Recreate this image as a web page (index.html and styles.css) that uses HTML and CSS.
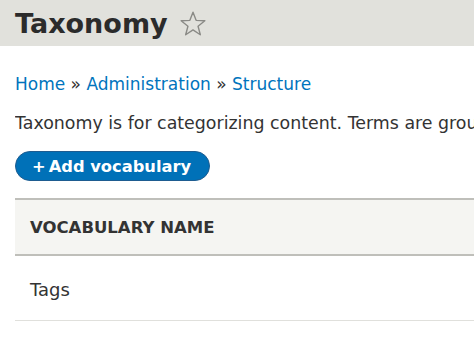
FILE: index.html
```html
<!DOCTYPE html>
<html>
<head>
  <meta charset="utf-8">
  <title>Taxonomy</title>
  <link rel="stylesheet" href="styles.css">
</head>
<body>
  <div class="page-header">
    <h1 class="page-title">Taxonomy</h1>
    <svg class="shortcut" width="28" height="28" viewBox="0 0 26 26">
      <path d="M13 2 L15.9 9.6 L24 10 L17.7 15.1 L19.8 23 L13 18.5 L6.2 23 L8.3 15.1 L2 10 L10.1 9.6 Z" fill="none" stroke="#8a8a86" stroke-width="1.3" stroke-linejoin="round"/>
    </svg>
  </div>
  <div class="content">
    <div class="breadcrumb">
      <a href="#">Home</a> » <a href="#">Administration</a> » <a href="#">Structure</a>
    </div>
    <p class="help">Taxonomy is for categorizing content. Terms are grouped into vocabularies.</p>
    <div class="actions">
      <a class="button" href="#">+<span>Add vocabulary</span></a>
    </div>
    <table class="vocabularies">
      <thead>
        <tr><th>Vocabulary name</th></tr>
      </thead>
      <tbody>
        <tr><td>Tags</td></tr>
      </tbody>
    </table>
  </div>
</body>
</html>
```

FILE: styles.css
```css
body {
  margin: 0;
  font-family: "DejaVu Sans", sans-serif;
  color: #333;
  background: #fff;
  overflow: hidden;
}
.page-header {
  background-color: #e1e1dc;
  height: 46px;
  padding: 0 15px;
  display: flex;
  align-items: center;
}
.page-title {
  margin: 0;
  font-size: 27px;
  font-weight: bold;
  color: #2b2b2b;
}
.shortcut {
  margin-left: 11px;
  margin-top: 2px;
}
.content {
  padding: 0 0 0 15px;
  white-space: nowrap;
}
.breadcrumb {
  margin-top: 27px;
  font-size: 17px;
  line-height: 22px;
}
.breadcrumb a {
  color: #0074bd;
  text-decoration: none;
}
.help {
  margin: 17px 0 0 0;
  font-size: 17.4px;
  line-height: 22px;
  overflow: hidden;
}
.actions {
  margin-top: 17px;
}
.button {
  display: inline-flex;
  align-items: center;
  height: 30px;
  padding: 0 18px 0 16px;
  background-color: #0071b8;
  border: 1px solid #1e5c90;
  border-radius: 16px;
  box-sizing: border-box;
  color: #fff;
  font-weight: bold;
  font-size: 16.3px;
  text-decoration: none;
}
.button span {
  margin-left: 3px;
}
.vocabularies {
  margin-top: 17px;
  width: 100%;
  border-collapse: collapse;
}
.vocabularies th {
  text-align: left;
  text-transform: uppercase;
  background-color: #f5f5f2;
  border-top: 2px solid #bfbfba;
  border-bottom: 2px solid #bfbfba;
  height: 54px;
  padding: 0 15px;
  font-size: 16.5px;
  font-weight: bold;
}
.vocabularies td {
  height: 62px;
  padding: 2px 15px 0 15px;
  font-size: 18px;
  border-bottom: 1px solid #e0e0dc;
}
```
